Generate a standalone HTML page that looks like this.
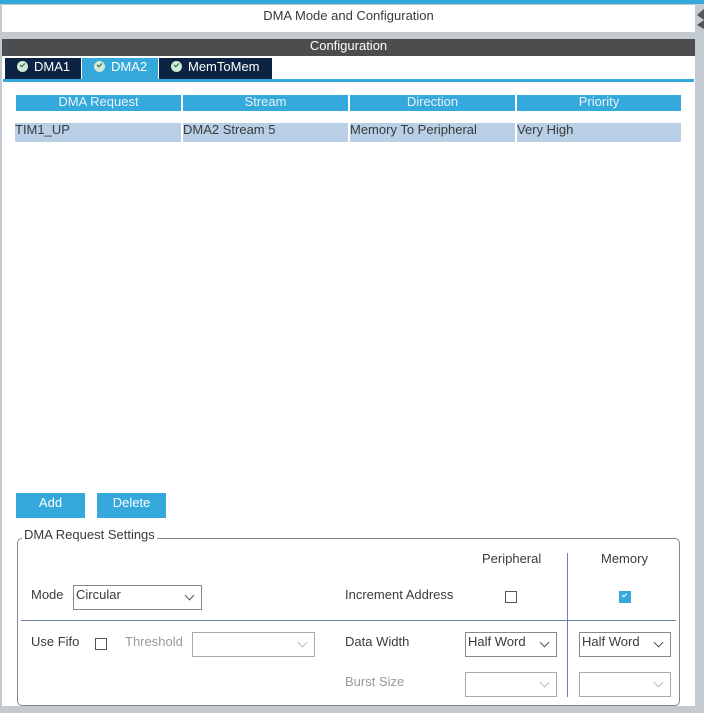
<!DOCTYPE html><html><head><style>
*{margin:0;padding:0;box-sizing:border-box}
body{width:704px;height:713px;background:#c3cbd1;font-family:"Liberation Sans",sans-serif;font-size:13px;color:#3a3a3a;position:relative;overflow:hidden}
.a{position:absolute}
.hd{background:#35a8dc;color:#e8f4fb;text-align:center;line-height:13px;height:16px}
.row{background:#b8cfe6;height:19px;line-height:14px}
.btn{background:#35a8dc;color:#fff;text-align:center;line-height:20px;height:25px}
.sel{border:1px solid #888;background:#fff;height:25px;line-height:18px;padding-left:2px}
.sel.d{border-color:#aaa}
.chev{position:absolute;right:8px;top:6px;width:7px;height:7px;border-right:1px solid #555;border-bottom:1px solid #555;transform:rotate(45deg)}
.d .chev{border-color:#bbb}
.cb{width:12px;height:12px;border:1px solid #555;background:#fff}
.tab{height:21px;top:58px;color:#fff;line-height:17px;font-size:13px}
.ck{display:inline-block;width:11px;height:11px;border-radius:50%;background:#cfe9d6;vertical-align:-1px;margin:0 6px 0 12px;position:relative}
.ck:after{content:"";position:absolute;left:3px;top:2px;width:4px;height:2px;border-left:1.5px solid #1a6a3a;border-bottom:1.5px solid #1a6a3a;transform:rotate(-45deg)}
</style></head><body>
<div class="a" style="left:0;top:0;width:704px;height:4px;background:#35a8dc"></div>
<div class="a" style="left:2px;top:5px;width:693px;height:27px;background:#fff;text-align:center;line-height:21px">DMA Mode and Configuration</div>
<div class="a" style="left:2px;top:39px;width:693px;height:17px;background:#4b4d4e;color:#fff;text-align:center;line-height:14px">Configuration</div>
<div class="a" style="left:2px;top:56px;width:693px;height:650px;background:#fff"></div>
<div class="a tab" style="left:5px;width:76px;background:#0d2344"><span class="ck"></span>DMA1</div>
<div class="a tab" style="left:82px;width:76px;background:#35a8dc"><span class="ck"></span>DMA2</div>
<div class="a tab" style="left:159px;width:113px;background:#0d2344"><span class="ck"></span>MemToMem</div>
<div class="a" style="left:3px;top:79px;width:691px;height:3px;background:#35a8dc"></div>
<div class="a" style="left:695px;top:5px;width:9px;height:708px;background:#c3cbd1"></div>
<div class="a" style="left:697px;top:9px;width:7px;height:20px;background:#555;clip-path:polygon(100% 0,0 30%,100% 55%,0 80%,100% 100%)"></div>
<div class="a hd" style="left:16px;top:95px;width:165px">DMA Request</div>
<div class="a hd" style="left:183px;top:95px;width:165px">Stream</div>
<div class="a hd" style="left:350px;top:95px;width:165px">Direction</div>
<div class="a hd" style="left:517px;top:95px;width:164px">Priority</div>
<div class="a row" style="left:15px;top:123px;width:166px">TIM1_UP</div>
<div class="a row" style="left:183px;top:123px;width:165px">DMA2 Stream 5</div>
<div class="a row" style="left:350px;top:123px;width:165px">Memory To Peripheral</div>
<div class="a row" style="left:517px;top:123px;width:164px">Very High</div>
<div class="a btn" style="left:16px;top:493px;width:69px">Add</div>
<div class="a btn" style="left:97px;top:493px;width:69px">Delete</div>
<div class="a" style="left:17px;top:538px;width:663px;height:168px;border:1px solid #888;border-radius:5px"></div>
<div class="a" style="left:22px;top:527px;background:#fff;padding:0 2px;line-height:16px">DMA Request Settings</div>
<div class="a" style="left:482px;top:551px">Peripheral</div>
<div class="a" style="left:601px;top:551px">Memory</div>
<div class="a" style="left:567px;top:553px;width:1px;height:144px;background:#6a7fb0"></div>
<div class="a" style="left:21px;top:620px;width:655px;height:1px;background:#6a7fb0"></div>
<div class="a" style="left:31px;top:587px">Mode</div>
<div class="a sel" style="left:73px;top:585px;width:129px">Circular<i class="chev"></i></div>
<div class="a" style="left:345px;top:587px">Increment Address</div>
<div class="a cb" style="left:505px;top:591px"></div>
<div class="a" style="left:619px;top:591px;width:12px;height:12px;background:#35a8dc"><div style="position:absolute;left:3px;top:2px;width:5px;height:3px;border-left:1.5px solid #fff;border-bottom:1.5px solid #fff;transform:rotate(-45deg)"></div></div>
<div class="a" style="left:31px;top:634px">Use Fifo</div>
<div class="a cb" style="left:95px;top:638px"></div>
<div class="a" style="left:125px;top:634px;color:#999">Threshold</div>
<div class="a sel d" style="left:192px;top:632px;width:123px"><i class="chev"></i></div>
<div class="a" style="left:345px;top:634px">Data Width</div>
<div class="a sel" style="left:465px;top:632px;width:92px">Half Word<i class="chev"></i></div>
<div class="a sel" style="left:579px;top:632px;width:92px">Half Word<i class="chev"></i></div>
<div class="a" style="left:345px;top:674px;color:#999">Burst Size</div>
<div class="a sel d" style="left:465px;top:672px;width:92px"><i class="chev"></i></div>
<div class="a sel d" style="left:579px;top:672px;width:92px"><i class="chev"></i></div>
</body></html>
